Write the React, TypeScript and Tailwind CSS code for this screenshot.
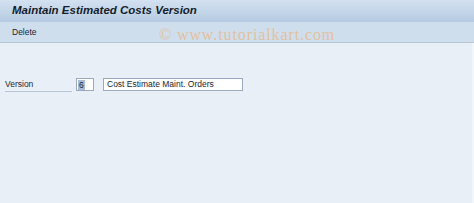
export default function App() {
  return (
    <div className="flex h-[203px] w-[474px] flex-col bg-[#f2f6fb] font-['Liberation_Sans',Arial,sans-serif]">
      <div className="flex h-[22px] shrink-0 items-center bg-gradient-to-b from-[#d3e1f0] to-[#b5cbe2] pl-[12px]">
        <span className="text-[11.5px] font-bold italic text-[#151c2a]">Maintain Estimated Costs Version</span>
      </div>
      <div className="relative flex h-[21px] shrink-0 items-center border-b border-[#b8c9dc] bg-[#cfdeec] pl-[12px]">
        <span className="text-[8.5px] text-[#1c2533]">Delete</span>
        <span className="absolute left-[159px] top-[1px] font-['Liberation_Serif',serif] text-[16px] tracking-[0.9px] text-[#e8b98a]/80">
          © www.tutorialkart.com
        </span>
      </div>
      <div className="mr-[2px] flex flex-1 flex-col bg-[#e9eff7] pb-[3px]">
        <div className="mt-[34px] flex items-center">
          <span className="ml-[5px] w-[67px] border-b border-[#b9c6d6] pt-[2px] pb-[2px] text-[8.5px] leading-[10px] text-[#1c2533]">Version</span>
          <span className="ml-[4px] flex h-[13px] w-[18px] items-center border border-[#9aa9bd] bg-white pl-px text-[8.5px] text-[#1c2533]">
            <span className="bg-[#a9bcd6] px-px leading-[10px]">6</span>
          </span>
          <span className="ml-[9px] flex h-[13px] w-[140px] items-center border border-[#9aa9bd] bg-white pl-[3px] text-[8.5px] text-[#1c2533]">
            Cost Estimate Maint. Orders
          </span>
        </div>
      </div>
    </div>
  );
}
